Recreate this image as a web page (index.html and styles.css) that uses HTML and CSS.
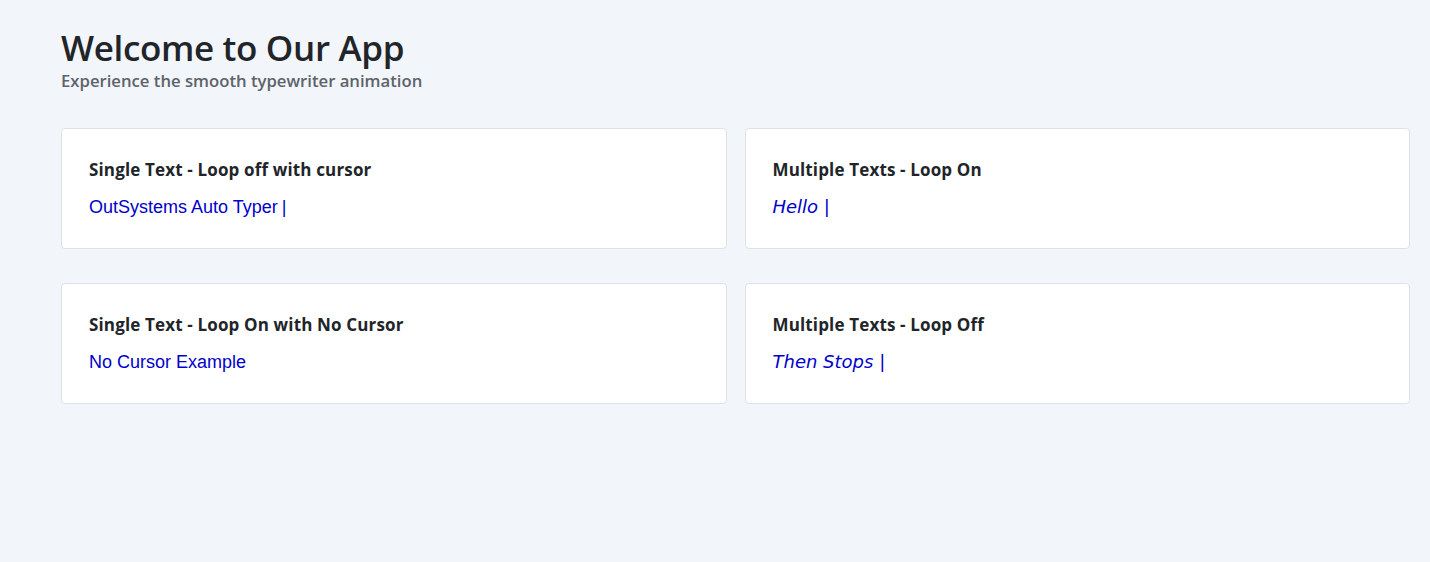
FILE: index.html
```html
<!DOCTYPE html>
<html lang="en">
<head>
<meta charset="utf-8">
<title>Welcome to Our App</title>
<link rel="stylesheet" href="styles.css">
</head>
<body>
<main class="page">
  <header class="hero">
    <h1 class="hero-title">Welcome to Our App</h1>
    <p class="hero-sub">Experience the smooth typewriter animation</p>
  </header>
  <section class="grid">
    <div class="card">
      <h2 class="card-title">Single Text - Loop off with cursor</h2>
      <div class="typed typed-plain">OutSystems Auto Typer<span class="cursor">|</span></div>
    </div>
    <div class="card">
      <h2 class="card-title">Multiple Texts - Loop On</h2>
      <div class="typed typed-italic">Hello <span class="cursor">|</span></div>
    </div>
    <div class="card">
      <h2 class="card-title">Single Text - Loop On with No Cursor</h2>
      <div class="typed typed-plain">No Cursor Example</div>
    </div>
    <div class="card">
      <h2 class="card-title">Multiple Texts - Loop Off</h2>
      <div class="typed typed-italic">Then Stops <span class="cursor">|</span></div>
    </div>
  </section>
</main>
</body>
</html>
```
FILE: styles.css
```css
html, body {
  margin: 0;
  padding: 0;
}
body {
  background: #f2f5f9;
  font-family: "Open Sans", "Noto Sans", sans-serif;
  color: #212529;
}
.page {
  padding: 26px 20px 0 61px;
}
.hero-title {
  margin: 0;
  font-size: 35px;
  font-weight: 600;
  line-height: 44px;
  color: #212529;
  letter-spacing: -0.35px;
}
.hero-sub {
  margin: 0;
  font-size: 16.7px;
  font-weight: 600;
  line-height: 21px;
  color: #5c636a;
}
.grid {
  margin-top: 37px;
  display: grid;
  grid-template-columns: 1fr 1fr;
  column-gap: 18px;
  row-gap: 34px;
}
.card {
  background: #fff;
  border: 1px solid #dee2e6;
  border-radius: 4px;
  height: 121px;
  box-sizing: border-box;
  padding: 28px 27px;
}
.card-title {
  margin: 0;
  font-size: 17px;
  font-weight: 700;
  line-height: 25px;
  letter-spacing: 0.15px;
  color: #212529;
}
.typed {
  margin-top: 14px;
  font-size: 18px;
  line-height: 22px;
  color: #0000cc;
}
.typed-plain {
  font-family: "Liberation Sans", Arial, sans-serif;
}
.typed-italic {
  font-family: "DejaVu Sans", Verdana, sans-serif;
  font-style: italic;
  font-size: 18px;
}
.typed-plain .cursor {
  margin-left: 4px;
}
```
